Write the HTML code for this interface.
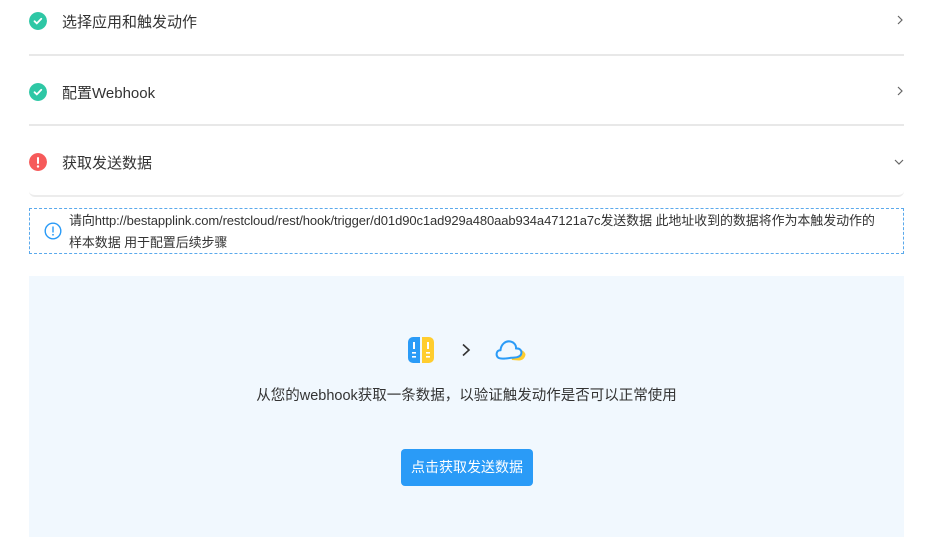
<!DOCTYPE html>
<html><head><meta charset="utf-8"><style>
*{margin:0;padding:0;box-sizing:border-box}
body{width:935px;height:543px;background:#fff;font-family:"Liberation Sans","Noto Sans CJK SC",sans-serif;color:#333;position:relative;overflow:hidden}
.row{position:absolute;left:29px;width:875px;height:70px;border-bottom:2px solid #e8e8e8}
.row .ic{position:absolute;left:0;width:18px;height:18px;border-radius:50%}
.row .t{position:absolute;left:33px;font-size:15px;color:#333}
.row .ar{position:absolute;right:0;font-size:13px;color:#666}
.info{position:absolute;left:29px;top:208px;width:875px;height:46px;border:1px dashed #5aa9ec;font-size:13px;line-height:22px;padding:1px 0 0 39px;color:#333;letter-spacing:-0.1px}
.panel{position:absolute;left:29px;top:276px;width:875px;height:261px;background:#f1f8fe}
</style></head><body>
<div class="row" style="top:-14px;height:70px">
 <svg class="ic" style="top:26px" viewBox="0 0 18 18"><circle cx="9" cy="9" r="9" fill="#2ec7a5"/><path d="M5.5 9.2l2.3 2.2 4.5-4.6" stroke="#fff" stroke-width="1.8" fill="none" stroke-linecap="round"/></svg>
 <div class="t" style="top:25px">选择应用和触发动作</div>
 <svg class="ar" style="top:29px" width="8" height="10" viewBox="0 0 8 10"><path d="M2 1l4 4-4 4" stroke="#666" stroke-width="1.2" fill="none"/></svg>
</div>
<div class="row" style="top:56px">
 <svg class="ic" style="top:27px" viewBox="0 0 18 18"><circle cx="9" cy="9" r="9" fill="#2ec7a5"/><path d="M5.5 9.2l2.3 2.2 4.5-4.6" stroke="#fff" stroke-width="1.8" fill="none" stroke-linecap="round"/></svg>
 <div class="t" style="top:26px">配置Webhook</div>
 <svg class="ar" style="top:30px" width="8" height="10" viewBox="0 0 8 10"><path d="M2 1l4 4-4 4" stroke="#666" stroke-width="1.2" fill="none"/></svg>
</div>
<div class="row" style="top:127px;border-bottom:2px solid #ececec;border-radius:0 0 6px 6px">
 <svg class="ic" style="top:26px" viewBox="0 0 18 18"><circle cx="9" cy="9" r="9" fill="#f65a5a"/><rect x="8" y="4" width="2" height="7" rx="1" fill="#fff"/><circle cx="9" cy="13.5" r="1.2" fill="#fff"/></svg>
 <div class="t" style="top:25px">获取发送数据</div>
 <svg class="ar" style="top:31px" width="10" height="8" viewBox="0 0 10 8"><path d="M1 2l4 4 4-4" stroke="#666" stroke-width="1.2" fill="none"/></svg>
</div>
<div class="info">
 <svg style="position:absolute;left:14px;top:13px" width="18" height="18" viewBox="0 0 18 18"><circle cx="9" cy="9" r="7.8" stroke="#2a9bf7" stroke-width="1.4" fill="none"/><rect x="8.3" y="4.5" width="1.4" height="6" fill="#2a9bf7"/><circle cx="9" cy="12.8" r="0.9" fill="#2a9bf7"/></svg>
 请向http://bestapplink.com/restcloud/rest/hook/trigger/d01d90c1ad929a480aab934a47121a7c发送数据 此地址收到的数据将作为本触发动作的<br>样本数据 用于配置后续步骤
</div>
<div class="panel">
 <svg style="position:absolute;left:379px;top:61px" width="26" height="26" viewBox="0 0 26 26"><path d="M5 0h7v26H5a5 5 0 0 1-5-5V5a5 5 0 0 1 5-5z" fill="#2a9bf7"/><path d="M14 0h7a5 5 0 0 1 5 5v16a5 5 0 0 1-5 5h-7z" fill="#ffcd2e"/><rect x="5" y="5" width="2" height="7" fill="#fff"/><rect x="4" y="15" width="4" height="1.6" fill="#fff"/><rect x="4" y="19" width="4" height="1.6" fill="#fff"/><rect x="19" y="5" width="2" height="7" fill="#fff"/><rect x="18" y="15" width="4" height="1.6" fill="#fff"/><rect x="18" y="19" width="4" height="1.6" fill="#fff"/></svg>
 <svg style="position:absolute;left:432px;top:67px" width="10" height="14" viewBox="0 0 10 14"><path d="M2 1.5l6 5.5-6 5.5" stroke="#333" stroke-width="1.6" fill="none"/></svg>
 <svg style="position:absolute;left:466px;top:61px" width="34" height="26" viewBox="0 0 34 26"><path d="M17 23A6.5 6.5 0 0 1 30.5 17 6.5 6.5 0 0 1 24 23.5z" fill="#ffcd2e"/><path d="M3 20.5C0.5 18 1.5 13 5.5 13.3 6 7 11 3.5 15.5 4.5 19.5 5.3 21.5 9 21 11.5 25 11 27.5 14 26 17.5 24.5 20.5 20 20.5 16 20.8 11 21.5 5.5 22.5 3 20.5z" fill="#f1f8fe" stroke="#2a9bf7" stroke-width="2" stroke-linejoin="round"/></svg>
 <div style="position:absolute;left:0;width:100%;top:108px;text-align:center;font-size:14.5px;color:#333">从您的webhook获取一条数据，以验证触发动作是否可以正常使用</div>
 <div style="position:absolute;left:372px;top:173px;width:132px;height:37px;background:#2a9bf7;border-radius:4px;color:#fff;font-size:14px;line-height:37px;text-align:center">点击获取发送数据</div>
</div>
</body></html>
